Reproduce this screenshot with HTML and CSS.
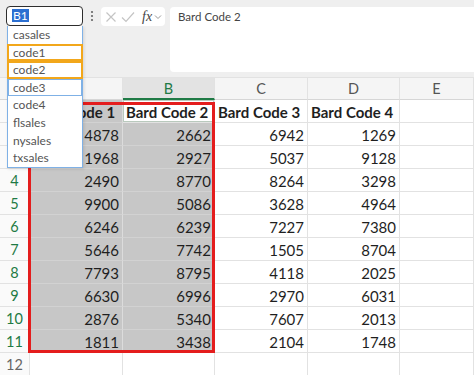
FILE: index.html
```html
<!DOCTYPE html>
<html>
<head>
<meta charset="utf-8">
<link rel="stylesheet" href="styles.css">
</head>
<body>
<div class="app">
  <div class="toolbar">
    <div class="namebox"><span class="sel">B1</span></div>
    <div class="dots">
      <svg width="4" height="12" viewBox="0 0 4 12"><circle cx="2" cy="2" r="1.1" fill="#666"/><circle cx="2" cy="6" r="1.1" fill="#666"/><circle cx="2" cy="10" r="1.1" fill="#666"/></svg>
    </div>
    <div class="fxgroup">
      <svg class="ico" width="12" height="12" viewBox="0 0 12 12"><path d="M1.5 1.5 L10.5 10.5 M10.5 1.5 L1.5 10.5" stroke="#c4c4c4" stroke-width="1.2" fill="none"/></svg>
      <svg class="ico" width="14" height="12" viewBox="0 0 14 12"><path d="M1 6.5 L5 10.5 L13 1.5" stroke="#c4c4c4" stroke-width="1.2" fill="none"/></svg>
      <span class="fx">fx</span>
      <svg class="chev" width="8" height="6" viewBox="0 0 8 6"><path d="M1 1.5 L4 4.5 L7 1.5" stroke="#999" stroke-width="1" fill="none"/></svg>
    </div>
    <div class="formula">Bard Code 2</div>
  </div>

  <div class="grid">
    <div class="ch corner"></div>
    <div class="ch">A</div>
    <div class="ch active">B</div>
    <div class="ch">C</div>
    <div class="ch">D</div>
    <div class="ch">E</div>

    <div class="rh">1</div>
    <div class="c h s">Bard Code 1</div>
    <div class="c h act">Bard Code 2</div>
    <div class="c h">Bard Code 3</div>
    <div class="c h">Bard Code 4</div>
    <div class="c"></div>

    <div class="rh g">2</div><div class="c n s">4878</div><div class="c n s">2662</div><div class="c n">6942</div><div class="c n">1269</div><div class="c"></div>
    <div class="rh g">3</div><div class="c n s">1968</div><div class="c n s">2927</div><div class="c n">5037</div><div class="c n">9128</div><div class="c"></div>
    <div class="rh g">4</div><div class="c n s">2490</div><div class="c n s">8770</div><div class="c n">8264</div><div class="c n">3298</div><div class="c"></div>
    <div class="rh g">5</div><div class="c n s">9900</div><div class="c n s">5086</div><div class="c n">3628</div><div class="c n">4964</div><div class="c"></div>
    <div class="rh g">6</div><div class="c n s">6246</div><div class="c n s">6239</div><div class="c n">7227</div><div class="c n">7380</div><div class="c"></div>
    <div class="rh g">7</div><div class="c n s">5646</div><div class="c n s">7742</div><div class="c n">1505</div><div class="c n">8704</div><div class="c"></div>
    <div class="rh g">8</div><div class="c n s">7793</div><div class="c n s">8795</div><div class="c n">4118</div><div class="c n">2025</div><div class="c"></div>
    <div class="rh g">9</div><div class="c n s">6630</div><div class="c n s">6996</div><div class="c n">2970</div><div class="c n">6031</div><div class="c"></div>
    <div class="rh g">10</div><div class="c n s">2876</div><div class="c n s">5340</div><div class="c n">7607</div><div class="c n">2013</div><div class="c"></div>
    <div class="rh g">11</div><div class="c n s">1811</div><div class="c n s">3438</div><div class="c n">2104</div><div class="c n">1748</div><div class="c"></div>
    <div class="rh">12</div><div class="c"></div><div class="c"></div><div class="c"></div><div class="c"></div><div class="c"></div>
  </div>

  <div class="redbox"></div>

  <ul class="dropdown">
    <li>casales</li>
    <li class="mark">code1</li>
    <li class="mark">code2</li>
    <li class="hover">code3</li>
    <li>code4</li>
    <li>flsales</li>
    <li>nysales</li>
    <li>txsales</li>
  </ul>
</div>
</body>
</html>
```

FILE: styles.css
```css
* { box-sizing: border-box; }
html, body { margin: 0; padding: 0; background: #fff; }
body { width: 474px; height: 375px; overflow: hidden; font-family: Lato, "Liberation Sans", sans-serif; }

.app { position: relative; width: 474px; height: 375px; overflow: hidden; }

.toolbar {
  height: 78px;
  background: #efefef;
  display: flex;
  align-items: flex-start;
  padding: 6px 0 0 6px;
  border-bottom: 1px solid #e2e2e2;
}

.namebox {
  width: 77px;
  height: 20px;
  background: #fff;
  border: 1.5px solid #2e2e2e;
  border-radius: 4px;
  padding: 2px 0 0 5px;
  font-size: 12px;
  line-height: 13px;
}
.namebox .sel {
  display: inline-block;
  background: #2b6fd1;
  color: #fff;
  padding: 0 1px;
  height: 13px;
}

.dots { width: 18px; height: 20px; display: flex; align-items: center; justify-content: center; }

.fxgroup {
  width: 64px;
  height: 19px;
  margin-top: 1px;
  background: #fff;
  border-radius: 4px;
  display: flex;
  align-items: center;
  padding-left: 4px;
  gap: 4px;
}
.fxgroup .ico { flex: none; }
.fx {
  font-family: "Liberation Serif", serif;
  font-style: italic;
  font-size: 14px;
  color: #444;
  margin-left: 3px;
  line-height: 1;
}
.chev { margin-left: -2px; }

.formula {
  flex: 1;
  height: 65px;
  margin: 1px 0 0 5px;
  background: #fff;
  border-radius: 4px 0 0 4px;
  padding: 3px 0 0 8px;
  font-size: 11.5px;
  color: #444;
}

.grid {
  display: grid;
  grid-template-columns: 30px 93px 92px 93px 92px 1fr;
  grid-template-rows: 22px repeat(12, 23px);
}

.ch {
  background: #f5f5f5;
  border-right: 1px solid #e2e2e2;
  border-bottom: 1px solid #d6d6d6;
  font-size: 14.5px;
  color: #555;
  display: flex;
  align-items: center;
  justify-content: center;
}
.ch.active { background: #e3e3e3; color: #1f7a45; border-bottom: 2px solid #1f7a45; }

.rh {
  background: #fafafa;
  border-right: 1px solid #e2e2e2;
  border-bottom: 1px solid #e2e2e2;
  font-size: 14.5px;
  color: #666;
  display: flex;
  align-items: center;
  justify-content: center;
}
.rh.g { color: #1f7a45; }

.c {
  border-right: 1px solid #e2e2e2;
  border-bottom: 1px solid #e2e2e2;
  font-size: 15px;
  color: #1f1f1f;
  display: flex;
  align-items: center;
  padding: 1px 3px 0 3px;
  white-space: nowrap;
  overflow: hidden;
}
.c.h { font-weight: 700; }
.c.n { justify-content: flex-end; }
.c.s { background: #c7c7c7; border-right-color: #dcdcdc; border-bottom-color: #d2d2d2; }
.c.act { background: #fff; box-shadow: inset 0 0 0 1px #b9c9bd; }

.redbox {
  position: absolute;
  left: 28px;
  top: 102px;
  width: 187px;
  height: 251px;
  border: 3px solid #e41d1d;
}

.dropdown {
  position: absolute;
  left: 7px;
  top: 26px;
  width: 76px;
  margin: 0;
  padding: 0;
  list-style: none;
  background: #fff;
  border: 1px solid #7fb1e6;
  border-top: none;
  box-shadow: 1px 1px 3px rgba(0,0,0,0.12);
}
.dropdown li {
  height: 17.6px;
  line-height: 17.6px;
  padding-left: 5px;
  font-size: 12px;
  color: #555;
}
.dropdown li.mark { box-shadow: inset 0 0 0 2px #f2a71b; margin: 0 -1px; padding-left: 6px; }
.dropdown li.hover { box-shadow: inset 0 0 0 1px #7fb1e6; }
```
